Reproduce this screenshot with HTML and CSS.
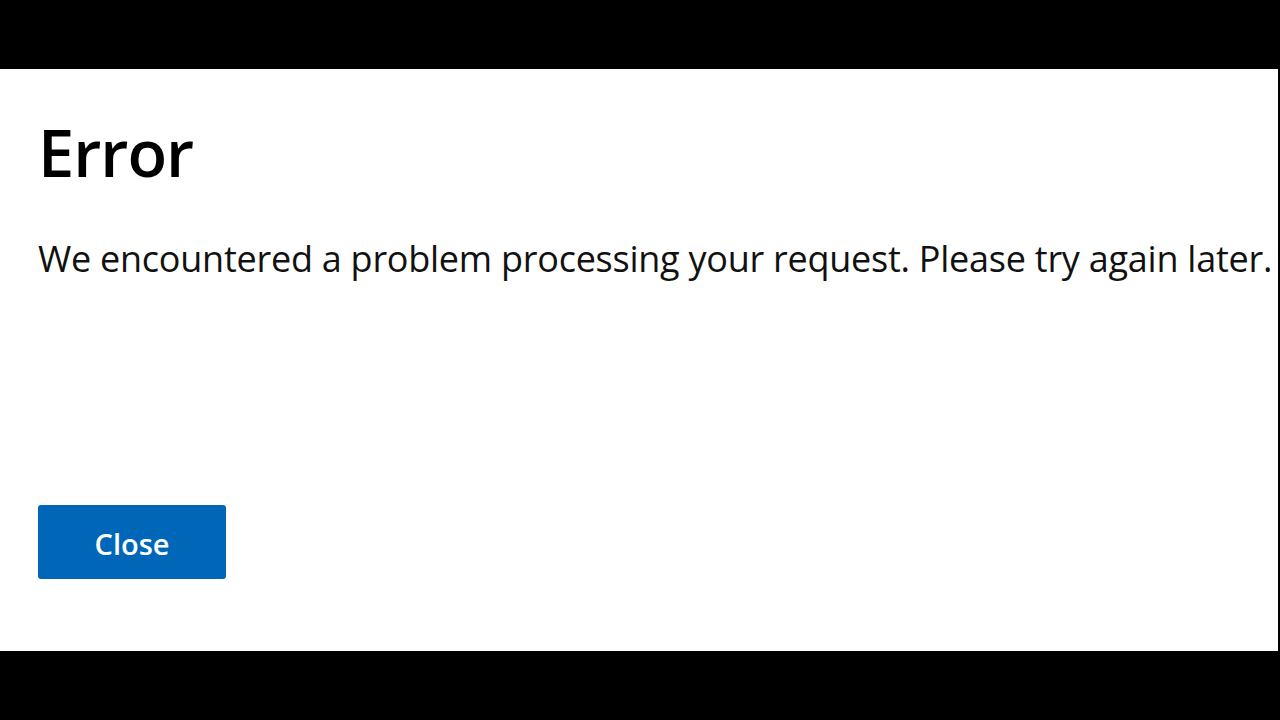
FILE: index.html
```html
<!DOCTYPE html>
<html>
<head>
	<meta charset="UTF-8">
	<title>Error</title>
	<link rel="stylesheet" href="styles.css">
</head>
<body>
	<div class="screen">
		<div class="dialog">
			<h1 class="title">Error</h1>
			<p class="message">We encountered a problem processing your request. Please try again later.</p>
			<div class="actions">
				<button class="closeBtn">Close</button>
			</div>
		</div>
	</div>
</body>
</html>
```

FILE: styles.css
```css
html, body {margin: 0;padding: 0;background: #000;}
body {font-family: "Open Sans", "Noto Sans", "Liberation Sans", sans-serif;}
.screen {width: 1280px;height: 720px;padding-top: 69px;box-sizing: border-box;}
.dialog {width: 1278px;height: 582px;background: #fff;box-sizing: border-box;padding: 51px 0 0 38px;display: flex;flex-direction: column;overflow: hidden;}
.title {margin: 0;font-size: 65px;font-weight: 600;line-height: 1;color: #000;letter-spacing: -1px;}
.message {margin: 0;margin-top: 52px;font-size: 36px;font-weight: 400;line-height: 1.2;color: #111;white-space: nowrap;letter-spacing: -0.25px;}
.actions {margin-top: 225px;}
.closeBtn {width: 188px;height: 74px;padding: 2px 0 0;border: 0;border-radius: 3px;background: #0067b8;color: #fff;font-family: inherit;font-size: 29px;font-weight: 600;cursor: pointer;}
```
